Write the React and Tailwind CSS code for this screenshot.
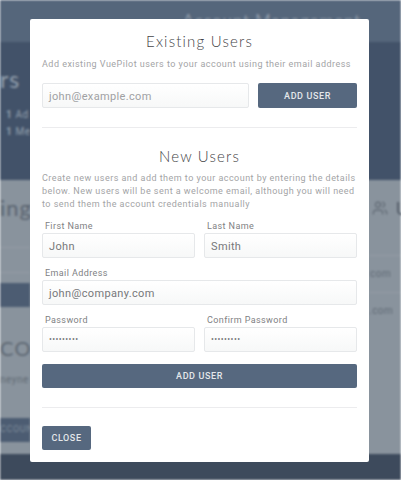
import React from "react";
import { Users } from "lucide-react";

const roboto = "font-['Roboto',sans-serif]";

function Field({ label, value, small }) {
  return (
    <div className="flex-1">
      <label className="block h-[14px] pl-[3px] text-[9px] leading-[14px] tracking-[0.4px] text-[#808183]">
        {label}
      </label>
      <div
        className={`flex h-[25px] items-center rounded-[2px] border border-[#e6e8ea] bg-gradient-to-b from-white to-[#f7f8f8] pl-[6px] ${
          small ? "text-[8.5px] tracking-[0.4px] text-[#77787a]" : "pt-[3px] text-[11px] tracking-[0.35px] text-[#77787a]"
        }`}
      >
        {value}
      </div>
    </div>
  );
}

function Button({ children, className }) {
  return (
    <button
      className={`rounded-[2px] bg-[#56687f] pt-[2px] text-[9px] font-medium tracking-[0.6px] text-[#e4e7ea] ${className}`}
    >
      {children}
    </button>
  );
}

export default function App() {
  return (
    <div className={`relative h-[480px] w-[401px] overflow-hidden ${roboto}`}>
      {/* page behind the modal */}
      <div className="flex h-full flex-col blur-[1.2px]">
        <div className="flex h-[42px] shrink-0 justify-end bg-[#55667b] pr-[40px] pt-[11px] font-['Lato',sans-serif] text-[17px] leading-[20px] tracking-[0.8px] text-[#8a96a5]">
          Account Management
        </div>
        <div className="h-[138px] shrink-0 bg-[#425269] text-[#93a0ae]">
          <div className="mt-[23px] h-[28px] font-['Lato',sans-serif] text-[23px] leading-[28px] tracking-[1px]">rs</div>
          <div className="mt-[13px] pl-[6px] text-[10px] leading-[17px] tracking-[0.6px]">
            <div><b>1</b> Ad</div>
            <div><b>1</b> Me</div>
          </div>
        </div>
        <div className="flex flex-1 justify-between bg-[#89939d]">
          <div className="w-[30px] text-[#5a6470]">
            <div className="mt-[16px] h-[24px] whitespace-nowrap font-['Lato',sans-serif] text-[22px] leading-[24px] tracking-[1px]">ing.</div>
            <div className="mt-[27px] h-[26px] border-y border-[#949da6]" />
            <div className="mt-[10px] h-[24px] bg-[#4c5c72]" />
            <div className="mt-[29px] h-[24px] whitespace-nowrap font-['Lato',sans-serif] text-[20px] leading-[24px] tracking-[1.5px] text-[#5d6772]">COU</div>
            <div className="mt-[13px] h-[14px] whitespace-nowrap text-[10px] leading-[14px] tracking-[0.5px] text-[#626b75]">neyne</div>
            <div className="mt-[31px] flex h-[24px] items-center whitespace-nowrap bg-[#4c5c72] text-[9px] tracking-[0.6px] text-[#7f8c9b]">CCOUN</div>
          </div>
          <div className="w-[32px] text-[#5f6974]">
            <div className="mt-[16px] flex h-[24px] items-center gap-[8px] whitespace-nowrap pl-[3px] text-[18px] text-[#4d5661]">
              <Users size={16} strokeWidth={1.4} className="shrink-0" />
              <span>U</span>
            </div>
            <div className="mt-[35px] border-t border-[#949da6]" />
            <div className="mt-[11px] h-[14px] pl-[1px] text-[10px] leading-[14px] tracking-[0.5px]">com</div>
            <div className="mt-[11px] border-t border-[#949da6] pt-[11px] text-[10px] leading-[14px] tracking-[0.5px]">.com</div>
          </div>
        </div>
        <div className="h-[26px] shrink-0 bg-[#3d4a5c]" />
      </div>

      {/* modal */}
      <div className="absolute left-[30px] top-[19px] h-[443px] w-[339px] rounded-[2px] bg-white px-[12px] pt-[14px]">
        <h2 className="-mt-[1px] h-[18px] text-center font-['Lato',sans-serif] text-[15px] font-light leading-[18px] tracking-[1.2px] text-[#444547]">
          Existing Users
        </h2>
        <p className="mt-[7px] h-[14px] text-[9px] leading-[14px] tracking-[0.47px] text-[#a3a4a6]">
          Add existing VuePilot users to your account using their email address
        </p>
        <div className="mt-[12px] flex gap-[9px]">
          <div className="w-[207px]">
            <div className="flex h-[25px] items-center rounded-[2px] border border-[#e6e8ea] bg-gradient-to-b from-white to-[#f7f8f8] pl-[6px] pt-[3px] text-[11px] tracking-[0.35px] text-[#a0a1a3]">
              john@example.com
            </div>
          </div>
          <Button className="h-[25px] w-[99px]">ADD USER</Button>
        </div>
        <hr className="mt-[19px] border-[#ececee]" />

        <h2 className="mt-[19px] h-[18px] text-center font-['Lato',sans-serif] text-[15px] font-light leading-[18px] tracking-[1.2px] text-[#444547]">
          New Users
        </h2>
        <p className="mt-[7px] text-[9px] leading-[13px] tracking-[0.47px] text-[#a3a4a6]">
          Create new users and add them to your account by entering the details below. New users will be sent a welcome email, although you will need to send them the account credentials manually
        </p>
        <div className="mt-[8px] flex gap-[9px]">
          <Field label="First Name" value="John" />
          <Field label="Last Name" value="Smith" />
        </div>
        <div className="mt-[8px]">
          <Field label="Email Address" value="john@company.com" />
        </div>
        <div className="mt-[8px] flex gap-[9px]">
          <Field label="Password" value="•••••••••" small />
          <Field label="Confirm Password" value="•••••••••" small />
        </div>
        <Button className="mt-[12px] block h-[24px] w-full">ADD USER</Button>
        <hr className="mt-[19px] border-[#ececee]" />
        <Button className="mt-[18px] block h-[24px] w-[49px]">CLOSE</Button>
      </div>
    </div>
  );
}
